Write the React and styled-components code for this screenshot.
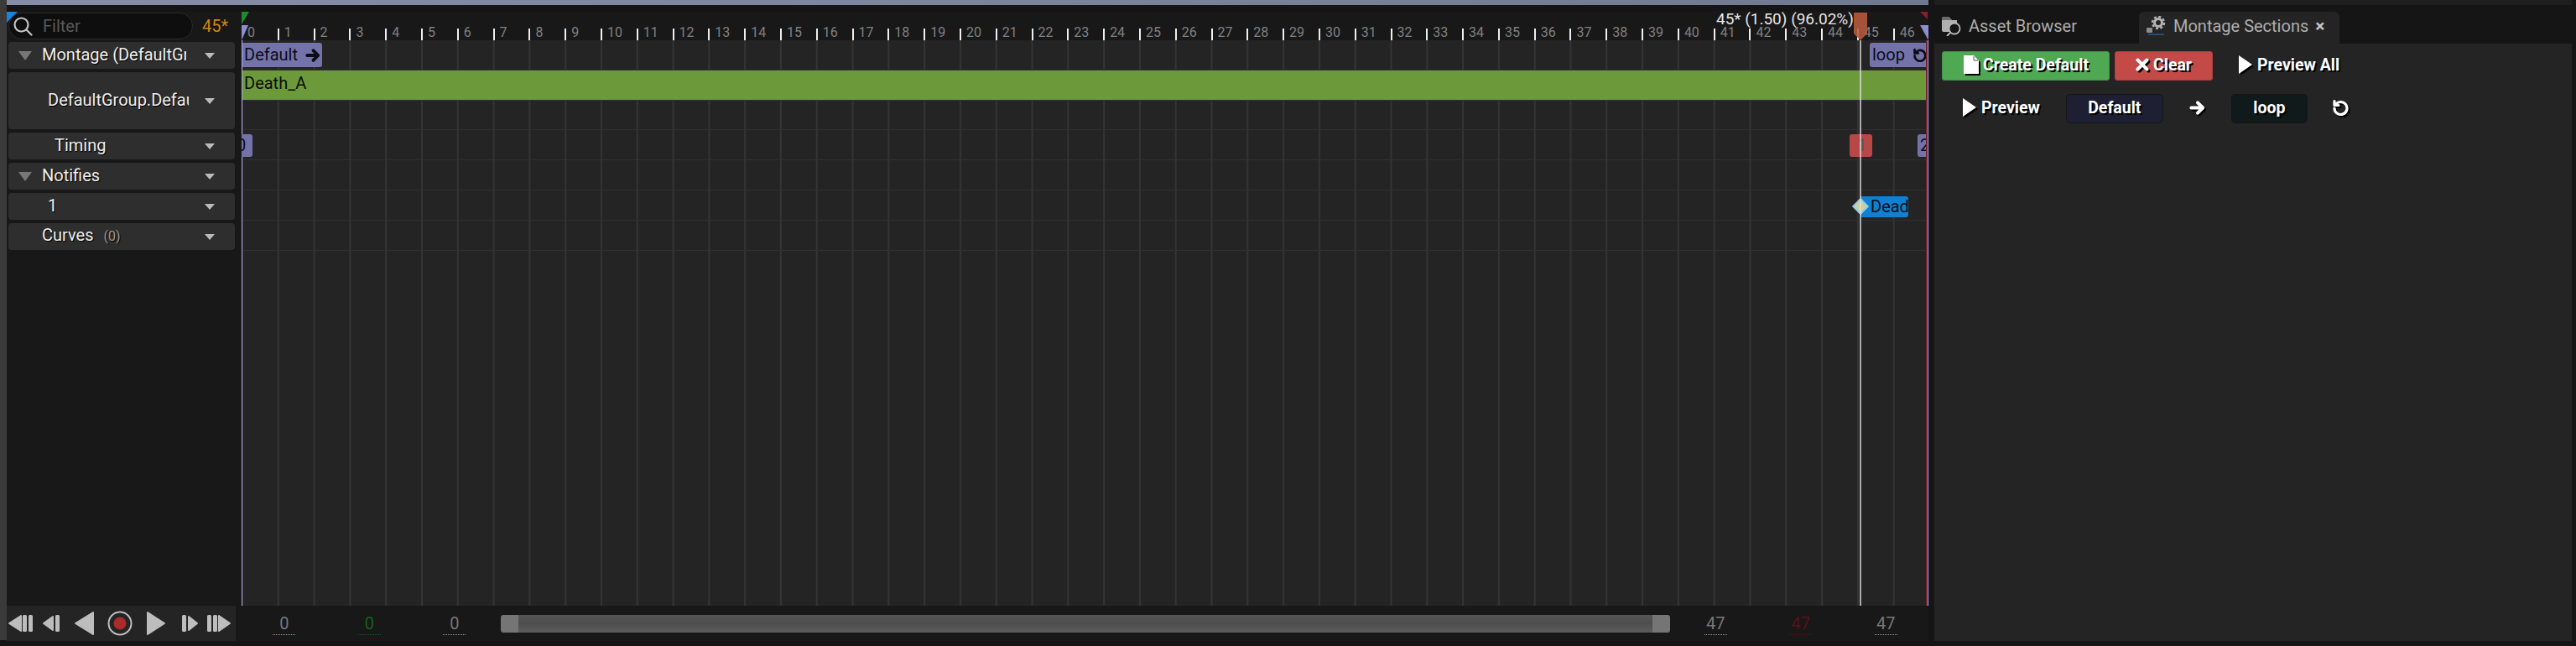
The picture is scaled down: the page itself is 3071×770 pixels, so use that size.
import React from "react";
import styled, { createGlobalStyle } from "styled-components";

const Global = createGlobalStyle`
  html, body { margin: 0; padding: 0; background: #151515; }
  #root { width: 3071px; height: 770px; overflow: hidden; }
  * { box-sizing: border-box; }
`;

const Page = styled.div`
  width: 3071px; height: 770px; display: flex; background: #151515;
  font-family: Roboto, "Liberation Sans", sans-serif; color: #ddd;
`;
const LeftEdge = styled.div`width: 8px; height: 763px; background: #3a3a3a; flex: none;`;
const Editor = styled.div`width: 2291px; flex: none; display: flex; flex-direction: column;`;
const TopBar = styled.div`height: 6px; background: linear-gradient(to right, #868da8, #7b869d 50%, #6f7a90); flex: none; margin-bottom: 8px;`;
const Upper = styled.div`flex: 1; min-height: 0; display: flex;`;

const Outliner = styled.div`width: 280px; flex: none; background: #181818; display: flex; flex-direction: column;`;
const SearchRow = styled.div`height: 36px; flex: none; display: flex; align-items: flex-start; position: relative; padding: 1px 0 0 2px;`;
const BlueCorner = styled.div`
  position: absolute; left: 0; top: 0; width: 0; height: 0;
  border-top: 13px solid #1585e0; border-right: 13px solid transparent;
`;
const FilterPill = styled.div`
  position: relative; width: 220px; height: 32px; background: #0e0e0e; border: 1px solid #2a2a2a; border-radius: 16px;
  display: flex; align-items: center; padding-left: 4px; gap: 12px; color: #5a5a5a; font-size: 20px; line-height: 24px;
`;
const FrameCount = styled.div`color: #d08414; font-size: 20px; margin: 5px 0 0 11px; line-height: 22px;`;
const Rows = styled.div`display: flex; flex-direction: column; gap: 4px; padding-left: 2px;`;
const Row = styled.div`
  width: 270px; height: ${p => p.$h}px; background: #2e2e2e; border-radius: 4px; display: flex; align-items: center;
  padding-left: ${p => p.$indent}px; padding-right: 24px; position: relative;
`;
const Disclosure = styled.div`
  position: absolute; left: 12px; top: 50%; margin-top: -5px; width: 0; height: 0;
  border-left: 8px solid transparent; border-right: 8px solid transparent; border-top: 11px solid #777;
`;
const RowLabel = styled.div`
  flex: 1; min-width: 0; overflow: hidden; white-space: nowrap; font-size: 20px; line-height: 24px; color: #eee;
  margin-right: ${p => p.$clip}px; text-shadow: 1px 1px 1px #000; padding-bottom: 2px;
`;
const Count = styled.span`font-size: 16px; color: #999; margin-left: 12px;`;
const Caret = styled.div`
  flex: none; width: 0; height: 0; border-left: 6px solid transparent; border-right: 6px solid transparent; border-top: 7px solid #bbb;
`;

const Timeline = styled.div`flex: 1; min-width: 0; position: relative; display: flex; flex-direction: column;`;
const Ruler = styled.div`height: 34px; flex: none; background: #181818; display: flex; overflow: hidden;`;
const RulerCell = styled.div`
  flex: 0 0 42.8px; position: relative; color: #808080; font-size: 16px; line-height: 18px;
  padding: 16px 0 0 ${p => (p.$first ? 7 : 8)}px;
  &::before { content: ""; display: ${p => (p.$first ? "none" : "block")}; position: absolute; left: 0; bottom: 0; width: 2px; height: 14px; background: #eee; }
`;
const TrackArea = styled.div`
  flex: 1; min-height: 0; position: relative; background-color: #242424; border-left: 1px solid #a9a9ee;
  background-image: linear-gradient(to right, #343434 2px, transparent 2px);
  background-size: 42.8px 100%; background-position: -1px 0;
`;
const RightStop = styled.div`
  position: absolute; right: 0; top: 0; bottom: 0; width: 3px; background: linear-gradient(to right, #7a2230 66%, #a9a9ee 66%);
`;
const TrackRow = styled.div`height: ${p => p.$h}px; border-bottom: 1px solid #303030; position: relative;`;
const Clip = styled.div`
  position: absolute; left: ${p => p.$x}px; top: ${p => p.$y}px; width: ${p => p.$w}px; height: ${p => p.$h}px;
  background: ${p => p.$bg}; color: ${p => p.$fg || "#0c0c16"}; border-radius: ${p => p.$r || "0 3px 3px 0"};
  font-size: 20px; line-height: ${p => p.$h}px; padding-left: ${p => p.$pad}px; overflow: hidden; white-space: nowrap;
  display: flex; align-items: center; gap: ${p => p.$gap || 0}px;
`;
const GreenBar = styled.div`
  position: absolute; left: 0; right: 2px; top: 0; bottom: 0; background: #6c9a3a; color: #0c0c0c; font-size: 20px; padding-left: 2px; line-height: 30px;
`;
const ZeroDigit = styled.span`margin-left: -6px;`;
const Diamond = styled.div`
  position: absolute; left: ${p => p.$x}px; top: ${p => p.$y}px; width: 14px; height: 14px; transform: rotate(45deg);
  background: #cfcf9e; border: 2px solid #8fd0ea;
`;
const PlayLine = styled.div`position: absolute; left: 1929px; top: 34px; bottom: 0; width: 2px; background: rgba(225,225,225,.72); z-index: 3;`;
const PlayHead = styled.svg`position: absolute; left: 1921px; top: 0; z-index: 3;`;
const Marker = styled.svg`position: absolute; left: ${p => p.$x}px; top: ${p => p.$y}px; z-index: 2;`;
const FrameInfo = styled.div`position: absolute; left: 1758px; top: -3px; font-size: 19px; line-height: 24px; color: #e6e6e6; white-space: nowrap; z-index: 2;`;

const BottomBar = styled.div`height: 42px; flex: none; display: flex; margin-bottom: 6px; background: #181818;`;
const Transport = styled.div`width: 273px; flex: none; background: #242424; display: flex; align-items: center; padding-left: 2px;`;
const TransportIcon = styled.svg`flex: none; margin-left: ${p => p.$ml}px; display: block;`;
const Scrub = styled.div`flex: 1; min-width: 0; display: flex; align-items: center; padding: 0 0 0 7px;`;
const NumberField = styled.div`flex: 0 0 101.5px; display: flex; justify-content: center;`;
const NumberText = styled.div`
  font-size: 20px; line-height: 24px; color: ${p => p.$c}; width: 27px; text-align: center; border-bottom: 1px dotted ${p => p.$u};
  padding-bottom: 1px; margin-top: 1px;
`;
const ScrollTrack = styled.div`
  flex: 1; min-width: 0; height: 21px; margin: 0 4px 0 4.5px; border-radius: 3px; background: #757575; padding: 0 21px;
`;
const ScrollFill = styled.div`height: 100%; background: linear-gradient(to bottom, #555, #4e4e4e 50%, #5c5c5c);`;

const Side = styled.div`width: 772px; flex: none; display: flex; flex-direction: column; padding: 0 5px 6px 7px; height: 770px;`;
const SideTop = styled.div`height: 6px; flex: none; background: #1e1e1e;`;
const TabStrip = styled.div`height: 46px; padding-top: 8px; flex: none; display: flex; align-items: stretch; background: #151515;`;
const Tab = styled.div`
  width: ${p => p.$w}px; display: flex; align-items: center; gap: ${p => p.$gap}px; padding: 0 0 4px ${p => p.$pad}px;
  border-radius: 6px 6px 0 0; background: ${p => (p.$active ? "#242424" : "transparent")}; color: #aeaeae; font-size: 20px; white-space: nowrap;
`;
const TabClose = styled.span`font-size: 21px; color: #c8c8c8; font-weight: 700; margin-left: -1px;`;
const Panel = styled.div`flex: 1; background: #242424; display: flex; flex-direction: column; padding: 9px 0 0 9px;`;
const ButtonRow = styled.div`display: flex; align-items: center; height: 35px;`;
const ActionButton = styled.div`
  width: ${p => p.$w}px; height: 35px; margin-right: ${p => p.$mr}px; background: ${p => p.$bg}; border-radius: 3px; border: 1px solid ${p => p.$edge};
  display: flex; align-items: center; justify-content: center; gap: ${p => p.$gap}px; padding-bottom: 3px;
  font-size: 19.5px; font-weight: 700; color: #fff; text-shadow: 2px 2px 0 #000; white-space: nowrap;
`;
const PlainButton = styled.div`
  display: flex; align-items: center; gap: ${p => p.$gap}px; margin-left: ${p => p.$ml}px; padding-bottom: 3px;
  font-size: 19.5px; font-weight: 700; color: #fff; text-shadow: 2px 2px 0 #000; white-space: nowrap;
`;
const SectionRow = styled(ButtonRow)`margin-top: 16px;`;
const SectionChip = styled.div`
  width: ${p => p.$w}px; height: 35px; margin-left: ${p => p.$ml}px; background: ${p => p.$bg}; border: 1px solid #151515; border-radius: 5px;
  display: flex; align-items: center; justify-content: center; padding-bottom: 3px; font-size: 19.5px; font-weight: 700; color: #fff; text-shadow: 2px 2px 0 #000;
`;
const RowIcon = styled.svg`flex: none; display: block; margin: 0 0 ${p => p.$mb || 0}px ${p => p.$ml || 0}px; filter: ${p => (p.$shadow ? "drop-shadow(2px 2px 0 #000)" : "none")};`;

const ArrowR = ({ size = 20, color = "#fff", shadow, ml, mb }) => (
  <RowIcon $shadow={shadow} $ml={ml} $mb={mb} width={size} height={size} viewBox="0 0 20 20" fill="none" stroke={color} strokeWidth="4.200" strokeLinecap="round" strokeLinejoin="round">
    <path d="M2.500 10H16.500M10.500 3.500 17 10l-6.500 6.500" />
  </RowIcon>
);
const ResetI = ({ size = 20, color = "#fff", shadow, ml, mb }) => (
  <RowIcon $shadow={shadow} $ml={ml} $mb={mb} width={size} height={size} viewBox="0 0 20 20" fill="none" stroke={color} strokeWidth="3.200" strokeLinecap="round" strokeLinejoin="round">
    <path d="M4.500 6.500A7.500 7.500 0 1 1 3 11" /><path d="M3 2.500v5h5" />
  </RowIcon>
);
const PlayI = ({ w = 18, h = 24 }) => (
  <RowIcon $shadow width={w} height={h} viewBox="0 0 18 24"><path d="M1 1 17 12 1 23Z" fill="#fff" /></RowIcon>
);

const tri = (pts) => <polygon points={pts} fill="#bdbdbd" stroke="#bdbdbd" strokeWidth="2" strokeLinejoin="round" />;
const bar = (x, w, y = 1, h = 20) => <rect x={x} y={y} width={w} height={h} rx="1.500" fill="#bdbdbd" />;

const frames = Array.from({ length: 47 }, (_, i) => i);

export default function App() {
  return (
    <Page>
      <Global />
      <LeftEdge />
      <Editor>
        <TopBar />
        <Upper>
          <Outliner>
            <SearchRow>
              <BlueCorner />
              <FilterPill>
                <svg width="24" height="24" viewBox="0 0 24 24" fill="none" stroke="#c4c4c4" strokeWidth="2.200" strokeLinecap="round">
                  <circle cx="10.500" cy="10.500" r="8" /><path d="m16.500 16.500 6 6" />
                </svg>
                Filter
              </FilterPill>
              <FrameCount>45*</FrameCount>
            </SearchRow>
            <Rows>
              <Row $h={32} $indent={40}><Disclosure /><RowLabel $clip={22}>Montage (DefaultGroup)</RowLabel><Caret /></Row>
              <Row $h={68} $indent={47}><RowLabel $clip={19}>DefaultGroup.DefaultSlot</RowLabel><Caret /></Row>
              <Row $h={32} $indent={55}><RowLabel $clip={19}>Timing</RowLabel><Caret /></Row>
              <Row $h={32} $indent={40}><Disclosure /><RowLabel $clip={19}>Notifies</RowLabel><Caret /></Row>
              <Row $h={32} $indent={47}><RowLabel $clip={19}>1</RowLabel><Caret /></Row>
              <Row $h={32} $indent={40}><RowLabel $clip={19}>Curves<Count>(0)</Count></RowLabel><Caret /></Row>
            </Rows>
          </Outliner>
          <Timeline>
            <Ruler>
              {frames.map((f) => (
                <RulerCell key={f} $first={f === 0}>{f}</RulerCell>
              ))}
            </Ruler>
            <FrameInfo>45* (1.50) (96.02%)</FrameInfo>
            <Marker $x={0} $y={0} width="10" height="16" viewBox="0 0 10 16"><polygon points="0,0 9,0 0,15" fill="#1f8a2f" /></Marker>
            <Marker $x={0} $y={16} width="9" height="18" viewBox="0 0 9 18"><polygon points="0,0 8,0 0,18" fill="#8d8dd0" /></Marker>
            <Marker $x={2001} $y={0} width="9" height="10" viewBox="0 0 9 10"><polygon points="0,0 9,0 9,9" fill="#8a1e2a" /></Marker>
            <Marker $x={2001} $y={16} width="10" height="18" viewBox="0 0 10 18"><polygon points="0,0 10,0 10,18" fill="#8d8dd0" /></Marker>
            <PlayHead width="18" height="34" viewBox="0 0 18 34">
              <polygon points="1,1 17,1 17,26 9,34 1,26" fill="#b75a3c" fillOpacity=".88" />
            </PlayHead>
            <PlayLine />
            <TrackArea>
              <TrackRow $h={36}>
                <Clip $x={0} $y={3} $w={95} $h={29} $bg="#7373aa" $pad={2} $gap={9}>Default <ArrowR size={18} color="#0c0c16" /></Clip>
                <Clip $x={1940} $y={3} $w={68} $h={29} $bg="#7373aa" $pad={3} $gap={9} $r="3px 0 0 3px">loop <ResetI size={17} color="#0c0c16" /></Clip>
              </TrackRow>
              <TrackRow $h={36}><GreenBar>Death_A</GreenBar></TrackRow>
              <TrackRow $h={35} />
              <TrackRow $h={36}>
                <Clip $x={-1} $y={5} $w={13} $h={27} $bg="#7373aa" $pad={0} $r="0 3px 3px 0"><ZeroDigit>0</ZeroDigit></Clip>
                <Clip $x={1916} $y={5} $w={27} $h={27} $bg="#b84848" $fg="#555" $pad={9} $r="3px">1</Clip>
                <Clip $x={1997} $y={5} $w={11} $h={27} $bg="#7373aa" $pad={3} $r="3px 0 0 3px">2</Clip>
              </TrackRow>
              <TrackRow $h={36} />
              <TrackRow $h={36}>
                <Clip $x={1929} $y={7} $w={57} $h={25} $bg="#1080d2" $pad={12}>Dead</Clip>
                <Diamond $x={1922} $y={12} />
              </TrackRow>
              <TrackRow $h={36} />
              <RightStop />
            </TrackArea>
          </Timeline>
        </Upper>
        <BottomBar>
          <Transport>
            <TransportIcon $ml={0} width="29" height="24" viewBox="0 0 29 24">{tri("15,3 15,21 1,12")}{bar(17, 5, 2)}{bar(24, 5, 2)}</TransportIcon>
            <TransportIcon $ml={12} width="20" height="24" viewBox="0 0 20 24">{tri("12,4 12,20 1,12")}{bar(15, 5, 2)}</TransportIcon>
            <TransportIcon $ml={18} width="23" height="30" viewBox="0 0 23 30">{tri("22,2 22,28 1,15")}</TransportIcon>
            <TransportIcon $ml={16} width="30" height="30" viewBox="0 0 30 30"><circle cx="15" cy="15" r="13.500" fill="none" stroke="#bdbdbd" strokeWidth="2" /><circle cx="15" cy="15" r="7.500" fill="#ab2b2b" /></TransportIcon>
            <TransportIcon $ml={17} width="22" height="30" viewBox="0 0 22 30">{tri("1,2 1,28 21,15")}</TransportIcon>
            <TransportIcon $ml={20} width="19" height="24" viewBox="0 0 19 24">{bar(0, 5, 2)}{tri("8,4 8,20 18,12")}</TransportIcon>
            <TransportIcon $ml={11} width="28" height="24" viewBox="0 0 28 24">{bar(0, 5, 2)}{bar(7, 5, 2)}{tri("14,3 14,21 27,12")}</TransportIcon>
          </Transport>
          <Scrub>
            <NumberField><NumberText $c="#777" $u="#999">0</NumberText></NumberField>
            <NumberField><NumberText $c="#14601a" $u="#14601a">0</NumberText></NumberField>
            <NumberField><NumberText $c="#777" $u="#999">0</NumberText></NumberField>
            <ScrollTrack><ScrollFill /></ScrollTrack>
            <NumberField><NumberText $c="#777" $u="#999">47</NumberText></NumberField>
            <NumberField><NumberText $c="#5a1018" $u="#5a1018">47</NumberText></NumberField>
            <NumberField><NumberText $c="#777" $u="#999">47</NumberText></NumberField>
          </Scrub>
        </BottomBar>
      </Editor>
      <Side>
        <SideTop />
        <TabStrip>
          <Tab $w={244} $gap={9} $pad={8}>
            <svg width="24" height="24" viewBox="0 0 24 24">
              <path d="M1 3.500Q1 1 3 1h6l4 4h6v14H3q-2 0-2-2Z" fill="#b0b0b0" />
              <path d="M1 3.500Q1 1 3 1h6l4 4H1Z" fill="#6b6b6b" />
              <circle cx="16" cy="15" r="6.500" fill="#151515" stroke="#b8b8b8" strokeWidth="1.800" />
              <path d="m11 20-4 4" stroke="#b8b8b8" strokeWidth="2" />
            </svg>
            Asset Browser
          </Tab>
          <Tab $w={239} $gap={9} $pad={8} $active>
            <svg width="24" height="24" viewBox="0 0 24 24">
              <circle cx="15" cy="8" r="4.500" fill="none" stroke="#b4b4b4" strokeWidth="3" />
              <circle cx="15" cy="8" r="7" fill="none" stroke="#b4b4b4" strokeWidth="2.500" strokeDasharray="3 2.500" />
              <rect x="1" y="14" width="7" height="6" rx="1" fill="#8c8c8c" />
              <path d="M3 21h19v2H3z" fill="#2b4a78" />
            </svg>
            <span>Montage Sections</span>
            <TabClose>×</TabClose>
          </Tab>
        </TabStrip>
        <Panel>
          <ButtonRow>
            <ActionButton $w={200} $mr={6} $bg="#4fa953" $edge="#439048" $gap={4}>
              <RowIcon $shadow width="20" height="24" viewBox="0 0 20 24">
                <path d="M1 1h12l6 6v16H1Z" fill="#fff" /><path d="M13 2v5h5" fill="none" stroke="#555" strokeWidth="1" />
              </RowIcon>
              Create Default
            </ActionButton>
            <ActionButton $w={117} $mr={0} $bg="#c44a48" $edge="#a93f3d" $gap={5}>
              <RowIcon $shadow width="16" height="16" viewBox="0 0 16 16" fill="none" stroke="#fff" strokeWidth="4" strokeLinecap="round"><path d="M2.500 2.500l11 11M13.500 2.500l-11 11" /></RowIcon>
              Clear
            </ActionButton>
            <PlainButton $ml={30} $gap={5}><PlayI />Preview All</PlainButton>
          </ButtonRow>
          <SectionRow>
            <PlainButton $ml={24} $gap={5}><PlayI />Preview</PlainButton>
            <SectionChip $w={116} $ml={31} $bg="#1f1f33">Default</SectionChip>
            <ArrowR shadow ml={31} mb={3} size={19} />
            <SectionChip $w={91} $ml={31} $bg="#101a1a">loop</SectionChip>
            <ResetI shadow ml={29} mb={3} size={20} />
          </SectionRow>
        </Panel>
      </Side>
    </Page>
  );
}
